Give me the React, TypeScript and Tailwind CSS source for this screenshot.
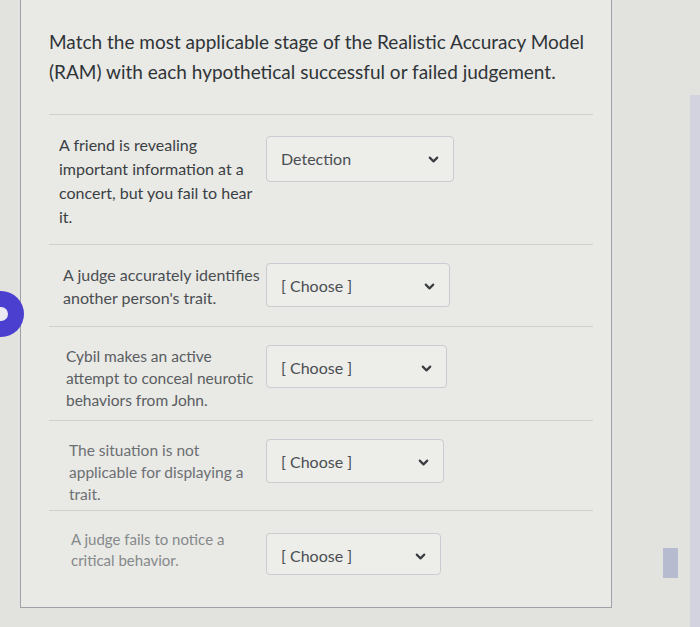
import { ChevronDown } from "lucide-react";

type Row = {
  text: string;
  value: string;
  rowClass: string;
  textClass: string;
  selectClass: string;
};

const rows: Row[] = [
  {
    text: "A friend is revealing important information at a concert, but you fail to hear it.",
    value: "Detection",
    rowClass: "h-[130px] pl-[10px]",
    textClass: "w-[200px] mr-[7px] text-[16px] text-[#3a3f44] leading-[24px]",
    selectClass: "w-[188px] h-[46px] mt-[3px]",
  },
  {
    text: "A judge accurately identifies another person's trait.",
    value: "[ Choose ]",
    rowClass: "h-[82px] pl-[14px]",
    textClass: "w-[200px] mr-[3px] text-[16px] text-[#4a4e52] leading-[23px]",
    selectClass: "w-[184px] h-[44px]",
  },
  {
    text: "Cybil makes an active attempt to conceal neurotic behaviors from John.",
    value: "[ Choose ]",
    rowClass: "h-[94px] pl-[17px]",
    textClass: "w-[196px] mr-[4px] text-[15.5px] text-[#5a5e62] leading-[22px]",
    selectClass: "w-[181px] h-[43px]",
  },
  {
    text: "The situation is not applicable for displaying a trait.",
    value: "[ Choose ]",
    rowClass: "h-[90px] pl-[20px]",
    textClass: "w-[180px] mr-[17px] text-[15.5px] text-[#6c7074] leading-[22px]",
    selectClass: "w-[178px] h-[44px]",
  },
  {
    text: "A judge fails to notice a critical behavior.",
    value: "[ Choose ]",
    rowClass: "h-[95px] pl-[22px]",
    textClass: "w-[175px] mr-[20px] text-[15px] text-[#86898c] leading-[21px]",
    selectClass: "w-[175px] h-[42px] mt-[4px]",
  },
];

function Select({ value, className }: { value: string; className: string }) {
  return (
    <div
      className={`flex shrink-0 items-start justify-between rounded-[4px] border border-[#c9cdd1] bg-[#ededea] pl-[14px] pr-[12px] pt-[11px] ${className}`}
    >
      <span className="text-[16px] leading-[22px] text-[#4a4e52]">{value}</span>
      <ChevronDown className="mt-[4px] h-[15px] w-[15px] text-[#3a3d40]" strokeWidth={3.4} />
    </div>
  );
}

export default function App() {
  return (
    <div
      className="relative flex h-[627px] w-[700px] overflow-hidden bg-[#e2e2de]"
      style={{ fontFamily: "Lato, 'Noto Sans', sans-serif" }}
    >
      {/* Card */}
      <div className="ml-[20px] flex h-[608px] w-[592px] flex-col border-x border-b border-[#9ea2a6] bg-[#e9e9e5] pl-[28px] pr-[18px]">
        <h1 className="pt-[27px] text-[19px] leading-[30px] text-[#2f3438]">
          Match the most applicable stage of the Realistic Accuracy Model (RAM) with each hypothetical successful or
          failed judgement.
        </h1>
        <div className="mt-[27px] flex flex-col">
          {rows.map((row) => (
            <div key={row.text} className={`flex items-start border-t border-[#cfd0cc] pt-[18px] ${row.rowClass}`}>
              <p className={`shrink-0 ${row.textClass}`}>{row.text}</p>
              <Select value={row.value} className={row.selectClass} />
            </div>
          ))}
        </div>
      </div>

      {/* Right margin with bluish scroll strip */}
      <div className="flex flex-1 justify-end">
        <div className="mt-[95px] h-[532px] w-[10px] bg-[#d2d3de]" />
      </div>

      {/* Overlays */}
      <div className="absolute left-[-22px] top-[291px] flex h-[46px] w-[46px] items-center rounded-full bg-[#4b3fcf]">
        <div className="ml-[16px] h-[14px] w-[14px] rounded-full bg-[#ece9f2]" />
      </div>
      <div className="absolute left-[663px] top-[548px] h-[30px] w-[15px] bg-[#b7bbd0]" />
    </div>
  );
}
